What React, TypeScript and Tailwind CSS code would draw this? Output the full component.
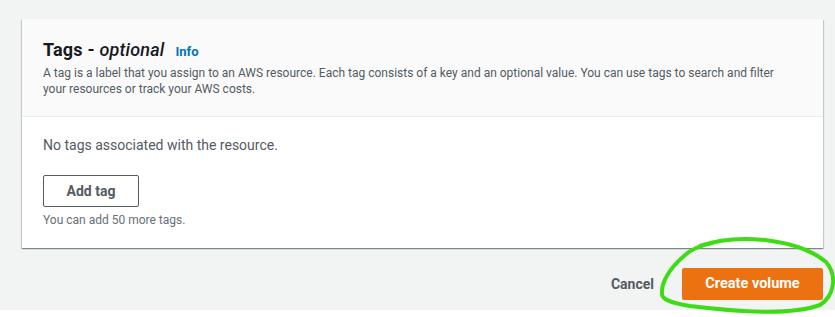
export default function App() {
  return (
    <div
      className="relative h-[317px] w-[835px] overflow-hidden bg-white"
      style={{ fontFamily: "Roboto, 'Liberation Sans', sans-serif" }}
    >
      <div className="h-[310px] bg-[#f2f3f3] pl-[22px] pr-[12px] pt-[19px]">
        <div className="bg-white shadow-[0_1px_1px_0_rgba(0,28,36,0.3),1px_1px_1px_0_rgba(0,28,36,0.15),-1px_1px_1px_0_rgba(0,28,36,0.15)]">
          <div className="h-[98px] border-b border-[#eaeded] bg-[#fafafa] px-[21px] pt-[20px]">
            <div className="flex items-baseline gap-[11px]">
              <h2 className="text-[18px] font-bold leading-[22px] tracking-[0.2px] text-[#16191f]">
                Tags - <i className="font-medium">optional</i>
              </h2>
              <a className="text-[13px] font-bold text-[#0073bb]">Info</a>
            </div>
            <p className="mt-[3px] max-w-[745px] text-[12px] leading-[16px] text-[#545b64]">
              A tag is a label that you assign to an AWS resource. Each tag consists of a key and an optional value. You can use tags to search and filter your resources or track your AWS costs.
            </p>
          </div>
          <div className="h-[131px] px-[21px] pt-[18px]">
            <p className="text-[14px] leading-[20px] text-[#545b64]">No tags associated with the resource.</p>
            <button className="mt-[20px] h-[32px] w-[96px] rounded-[2px] border border-[#545b64] bg-white text-[14px] font-bold text-[#545b64]">
              Add tag
            </button>
            <p className="mt-[5px] text-[12px] leading-[16px] text-[#687078]">You can add 50 more tags.</p>
          </div>
        </div>
        <div className="mt-[20px] flex items-center justify-end gap-[28px]">
          <span className="text-[14px] font-bold text-[#545b64]">Cancel</span>
          <button className="h-[32px] w-[141px] rounded-[2px] bg-[#ec7211] text-[14.5px] font-bold text-white">
            Create volume
          </button>
        </div>
      </div>
      <svg className="pointer-events-none absolute left-0 top-0" width="835" height="317" viewBox="0 0 835 317">
        <path
          d="M700 246 C740 232 800 240 826 262 C838 276 834 296 820 305 C790 316 730 311 690 306 C672 303 662 300 662 294 C661 282 670 268 684 256 C690 250 698 246 712 243"
          fill="none"
          stroke="#3ddc15"
          strokeWidth="4"
          strokeLinecap="round"
        />
      </svg>
    </div>
  );
}
